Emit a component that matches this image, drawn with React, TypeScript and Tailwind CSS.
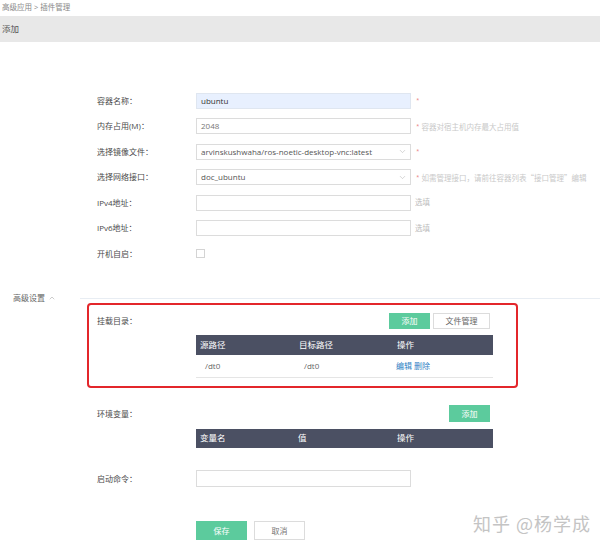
import { ChevronDown, ChevronUp } from "lucide-react";

const font = { fontFamily: '"Open Sans", "Noto Sans CJK SC", sans-serif' };
const cjk = { fontFamily: '"Noto Sans CJK SC", sans-serif' };

type RowProps = {
  label: string;
  children: React.ReactNode;
};

const FormRow = ({ label, children }: RowProps) => {
  return (
    <div className="flex h-[25.5px] items-center">
      <span className="w-[99px] shrink-0 text-[8px] text-[#4a4a4a]">{label}</span>
      {children}
    </div>
  );
};

const TextInput = ({ value = "", tint = false }: { value?: string; tint?: boolean }) => {
  return (
    <div
      className={
        "flex h-[16px] w-[215px] items-center border px-[4px] text-[8px] " +
        (tint ? "border-[#dfe6f0] bg-[#e8f0fe] text-[#333]" : "border-[#dcdcdc] bg-white text-[#777]")
      }
    >
      {value}
    </div>
  );
};

const SelectInput = ({ value }: { value: string }) => {
  return (
    <div className="flex h-[16px] w-[215px] items-center justify-between border border-[#dcdcdc] bg-white pl-[4px] pr-[3px] text-[8px] text-[#555]">
      <span>{value}</span>
      <ChevronDown size={9} strokeWidth={1.5} className="text-[#b8b8b8]" />
    </div>
  );
};

const Required = ({ hint }: { hint?: string }) => {
  return (
    <span className="ml-[5px] flex items-center text-[7.5px] text-[#c9c9c9]" style={cjk}>
      <span className="mr-[2px] text-[#ec8f8f]">*</span>
      {hint}
    </span>
  );
};

const Optional = () => <span className="ml-[4px] text-[7.5px] text-[#bbb]">选填</span>;

const GreenButton = ({ text, w, h }: { text: string; w: string; h: string }) => {
  return (
    <button className={`${w} ${h} flex items-center justify-center bg-[#5ccb9d] text-[8px] text-white`}>
      {text}
    </button>
  );
};

export default function App() {
  return (
    <div className="relative h-[550px] w-[600px] overflow-hidden bg-white" style={font}>
      {/* breadcrumb */}
      <div className="flex h-[16px] items-center pl-[2px] text-[7.5px] text-[#888]">高级应用 &gt; 插件管理</div>
      <div className="flex h-[26px] items-center bg-[#e8e8e8] pl-[2px] text-[8.5px] text-[#555]">添加</div>

      {/* basic fields */}
      <div className="pl-[97px] pt-[46px]">
        <FormRow label="容器名称：">
          <TextInput value="ubuntu" tint />
          <Required />
        </FormRow>
        <FormRow label="内存占用(M)：">
          <TextInput value="2048" />
          <Required hint="容器对宿主机内存最大占用值" />
        </FormRow>
        <FormRow label="选择镜像文件：">
          <SelectInput value="arvinskushwaha/ros-noetic-desktop-vnc:latest" />
          <Required />
        </FormRow>
        <FormRow label="选择网络接口：">
          <SelectInput value="doc_ubuntu" />
          <Required hint="如需管理接口，请前往容器列表“接口管理”编辑" />
        </FormRow>
        <FormRow label="IPv4地址：">
          <TextInput />
          <Optional />
        </FormRow>
        <FormRow label="IPv6地址：">
          <TextInput />
          <Optional />
        </FormRow>
        <FormRow label="开机自启：">
          <span className="h-[9px] w-[9px] border border-[#d4d4d4] bg-white" />
        </FormRow>
      </div>

      {/* advanced settings */}
      <div className="mt-[26.5px] flex h-[10px] items-center">
        <span className="ml-[13px] flex w-[67px] items-center gap-[3px] text-[8px] text-[#666]">
          高级设置
          <ChevronUp size={8} strokeWidth={1.5} className="text-[#999]" />
        </span>
        <div className="h-px flex-1 bg-[#e8edf3]" />
      </div>

      {/* mount dirs */}
      <div className="ml-[87px] w-[431px] rounded-[4px] border-2 border-[#e3262b] pb-[8px] pl-[8px] pt-[8px]">
        <div className="flex h-[16px] items-center">
          <span className="w-[99px] text-[8px] text-[#4a4a4a]">挂载目录：</span>
          <div className="ml-[193px] flex gap-[3px]">
            <GreenButton text="添加" w="w-[41px]" h="h-[16px]" />
            <button className="flex h-[16px] w-[57px] items-center justify-center border border-[#dcdcdc] bg-white text-[8px] text-[#666]">
              文件管理
            </button>
          </div>
        </div>
        <div className="ml-[99px] mt-[6px] w-[297px]">
          <div className="grid h-[20px] grid-cols-[99px_98px_1fr] items-center bg-[#4b5063] pl-[4px] text-[8.5px] text-white">
            <span>源路径</span>
            <span>目标路径</span>
            <span>操作</span>
          </div>
          <div className="grid h-[23px] grid-cols-[99px_98px_1fr] items-center border-b border-[#e5e5e5] pl-[9px] text-[8px] text-[#666]">
            <span>/dt0</span>
            <span>/dt0</span>
            <span className="-ml-[6px] text-[#2f7fc4]">编辑 删除</span>
          </div>
        </div>
      </div>

      {/* env vars */}
      <div className="ml-[97px] mt-[17px] flex h-[17px] items-center">
        <span className="w-[99px] text-[8px] text-[#4a4a4a]">环境变量：</span>
        <div className="ml-[253px]">
          <GreenButton text="添加" w="w-[41px]" h="h-[17px]" />
        </div>
      </div>
      <div className="ml-[196px] mt-[7px] grid h-[19px] w-[297px] grid-cols-[98px_99px_1fr] items-center bg-[#4b5063] pl-[4px] text-[8.5px] text-white">
        <span>变量名</span>
        <span>值</span>
        <span>操作</span>
      </div>

      {/* startup command */}
      <div className="ml-[97px] mt-[22px] flex h-[17px] items-center">
        <span className="w-[99px] text-[8px] text-[#4a4a4a]">启动命令：</span>
        <div className="h-[17px] w-[215px] border border-[#dcdcdc] bg-white" />
      </div>

      <div className="ml-[196px] mt-[34px] flex gap-[7px]">
        <GreenButton text="保存" w="w-[51px]" h="h-[19px]" />
        <button className="flex h-[19px] w-[51px] items-center justify-center border border-[#dcdcdc] bg-white text-[8px] text-[#777]">
          取消
        </button>
      </div>

      {/* watermark */}
      <div
        className="absolute left-[473px] top-[510px] text-[18px] tracking-[1px] text-[#c4c4c4]"
        style={cjk}
      >
        知乎 @杨学成
      </div>
    </div>
  );
}
